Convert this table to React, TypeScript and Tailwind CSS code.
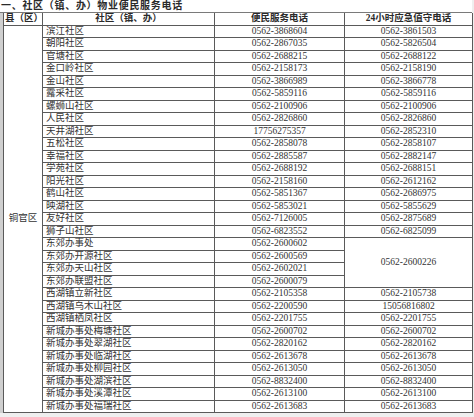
import React from "react";

type Row = { name: string; a: string; b?: string; merged?: number };

const rows: Row[] = [
  { name: "滨江社区", a: "0562-3868604", b: "0562-3861503" },
  { name: "朝阳社区", a: "0562-2867035", b: "0562-5826504" },
  { name: "官塘社区", a: "0562-2688215", b: "0562-2688122" },
  { name: "金口岭社区", a: "0562-2158173", b: "0562-2158190" },
  { name: "金山社区", a: "0562-3866989", b: "0562-3866778" },
  { name: "露采社区", a: "0562-5859116", b: "0562-5859116" },
  { name: "螺蛳山社区", a: "0562-2100906", b: "0562-2100906" },
  { name: "人民社区", a: "0562-2826860", b: "0562-2826860" },
  { name: "天井湖社区", a: "17756275357", b: "0562-2852310" },
  { name: "五松社区", a: "0562-2858078", b: "0562-2858107" },
  { name: "幸福社区", a: "0562-2885587", b: "0562-2882147" },
  { name: "学苑社区", a: "0562-2688192", b: "0562-2688151" },
  { name: "阳光社区", a: "0562-2158160", b: "0562-2612162" },
  { name: "鹤山社区", a: "0562-5851367", b: "0562-2686975" },
  { name: "映湖社区", a: "0562-5853021", b: "0562-5855629" },
  { name: "友好社区", a: "0562-7126005", b: "0562-2875689" },
  { name: "狮子山社区", a: "0562-6823552", b: "0562-6825099" },
  { name: "东郊办事处", a: "0562-2600602", b: "0562-2600226", merged: 4 },
  { name: "东郊办开源社区", a: "0562-2600569" },
  { name: "东郊办天山社区", a: "0562-2602021" },
  { name: "东郊办联盟社区", a: "0562-2600079" },
  { name: "西湖镇立新社区", a: "0562-2105358", b: "0562-2105738" },
  { name: "西湖镇乌木山社区", a: "0562-2200590", b: "15056816802" },
  { name: "西湖镇栖凤社区", a: "0562-2201755", b: "0562-2201755" },
  { name: "新城办事处梅塘社区", a: "0562-2600702", b: "0562-2600702" },
  { name: "新城办事处翠湖社区", a: "0562-2820162", b: "0562-2820162" },
  { name: "新城办事处临湖社区", a: "0562-2613678", b: "0562-2613678" },
  { name: "新城办事处柳园社区", a: "0562-2613050", b: "0562-2613050" },
  { name: "新城办事处湖滨社区", a: "0562-8832400", b: "0562-8832400" },
  { name: "新城办事处溪潭社区", a: "0562-2613100", b: "0562-2613100" },
  { name: "新城办事处福瑞社区", a: "0562-2613683", b: "0562-2613683" },
];

const font = {
  fontFamily: '"Liberation Serif", "Noto Sans CJK SC", serif',
};

export default function App() {
  return (
    <div
      className="w-[474px] h-[417px] bg-[#efefef] overflow-hidden text-[#333333]"
      style={font}
    >
      <div className="h-[13px] bg-white flex items-center pl-[1px] text-[10px] font-bold leading-none tracking-[0.7px] border-b border-[#7a7a7a] w-[472px] text-[#2a2a2a]">
        一、社区（镇、办）物业便民服务电话
      </div>
      <div className="flex">
        <div className="w-[3px] h-[400px] bg-[#cfcfcf]" />
        <div className="grid grid-cols-[39px_172px_130px_128px] auto-rows-[12.5px] border-l border-[#5a5a5a] bg-white text-[9.5px] leading-none">
          <div className="h-[13px] border-r border-b border-[#5a5a5a] flex items-center pl-[1px] font-bold text-[#2a2a2a]">县（区）</div>
          <div className="h-[13px] border-r border-b border-[#5a5a5a] flex items-center justify-center font-bold text-[#2a2a2a]">社区（镇、办）</div>
          <div className="h-[13px] border-r border-b border-[#5a5a5a] flex items-center justify-center font-semibold text-[#2a2a2a]">便民服务电话</div>
          <div className="h-[13px] border-r border-b border-[#5a5a5a] flex items-center justify-center font-semibold text-[#2a2a2a]">24小时应急值守电话</div>
          <div className="row-span-[31] border-r border-b border-[#5a5a5a] flex items-center justify-center">铜官区</div>
          {rows.map((r) => (
            <React.Fragment key={r.name}>
              <div className="border-r border-b border-[#5a5a5a] flex items-center pl-[3px] whitespace-nowrap">{r.name}</div>
              <div className="border-r border-b border-[#5a5a5a] flex items-center justify-center">{r.a}</div>
              {r.b !== undefined && (
                r.merged ? (
                  <div className="row-span-4 border-r border-b border-[#5a5a5a] flex items-center justify-center">{r.b}</div>
                ) : (
                  <div className="border-r border-b border-[#5a5a5a] flex items-center justify-center">{r.b}</div>
                )
              )}
            </React.Fragment>
          ))}
        </div>
      </div>
    </div>
  );
}
